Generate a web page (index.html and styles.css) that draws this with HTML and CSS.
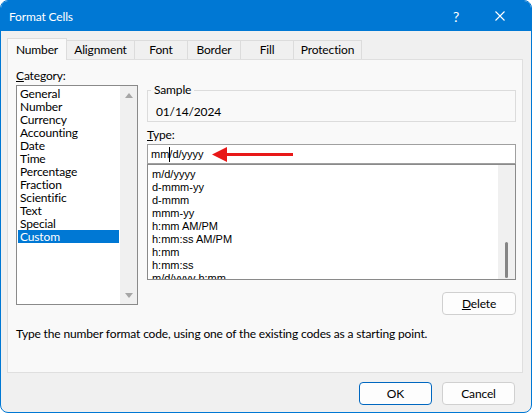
FILE: index.html
```html
<!DOCTYPE html>
<html>
<head>
<meta charset="utf-8">
<link rel="stylesheet" href="styles.css">
</head>
<body>
<div class="window">
  <div class="titlebar">
    <span class="title">Format Cells</span>
    <span class="tb-btn help">?</span>
    <span class="tb-btn close"><svg width="10" height="10" viewBox="0 0 10 10"><path d="M0.5 0.5 L9.5 9.5 M9.5 0.5 L0.5 9.5" stroke="#fff" stroke-width="1.1" fill="none"/></svg></span>
  </div>
  <div class="body">
    <div class="tabs">
      <div class="tab active tab-number">Number</div>
      <div class="tab tab-align">Alignment</div>
      <div class="tab tab-font">Font</div>
      <div class="tab tab-border">Border</div>
      <div class="tab tab-fill">Fill</div>
      <div class="tab tab-prot">Protection</div>
    </div>
    <div class="pane">
      <div class="columns">
        <div class="left">
          <div class="label"><u>C</u>ategory:</div>
          <div class="listbox cat">
            <div class="items">
              <div class="item">General</div>
              <div class="item">Number</div>
              <div class="item">Currency</div>
              <div class="item">Accounting</div>
              <div class="item">Date</div>
              <div class="item">Time</div>
              <div class="item">Percentage</div>
              <div class="item">Fraction</div>
              <div class="item">Scientific</div>
              <div class="item">Text</div>
              <div class="item">Special</div>
              <div class="item selected">Custom</div>
            </div>
            <div class="vscroll arrows"><span class="tri-up"></span><span class="tri-down"></span></div>
          </div>
        </div>
        <div class="right">
          <fieldset class="sample">
            <legend>Sample</legend>
            <div class="sample-value">01/14/2024</div>
          </fieldset>
          <div class="label type-label"><u>T</u>ype:</div>
          <div class="input">mm<span class="caret"></span>/d/yyyy<svg class="arrow" width="82" height="17" viewBox="0 0 82 17"><path d="M13 8.5 H81" stroke="#e81818" stroke-width="3"/><polygon points="0,8.5 15,1 15,16" fill="#e81818"/></svg></div>
          <div class="listbox fmt">
            <div class="items">
              <div class="item">m/d/yyyy</div>
              <div class="item">d-mmm-yy</div>
              <div class="item">d-mmm</div>
              <div class="item">mmm-yy</div>
              <div class="item">h:mm AM/PM</div>
              <div class="item">h:mm:ss AM/PM</div>
              <div class="item">h:mm</div>
              <div class="item">h:mm:ss</div>
              <div class="item">m/d/yyyy h:mm</div>
            </div>
            <div class="vscroll thin"><span class="thumb"></span></div>
          </div>
          <div class="actions"><button class="btn"><u>D</u>elete</button></div>
        </div>
      </div>
      <div class="desc">Type the number format code, using one of the existing codes as a starting point.</div>
    </div>
    <div class="footer">
      <button class="btn default">OK</button>
      <button class="btn">Cancel</button>
    </div>
  </div>
</div>
</body>
</html>
```

FILE: styles.css
```css
html, body {
  margin: 0;
  background: #ffffff;
}
body {
  font-family: Lato, "Noto Sans", sans-serif;
  font-size: 12px;
  letter-spacing: -0.15px;
  color: #000;
}
.window {
  width: 532px;
  height: 413px;
  box-sizing: border-box;
  border: 1px solid #0078d4;
  border-radius: 8px;
  background: #f0f0f0;
  display: flex;
  flex-direction: column;
  overflow: hidden;
}
.titlebar {
  height: 30px;
  flex: none;
  background: #0078d4;
  color: #fff;
  display: flex;
  align-items: center;
  padding: 0 9px 0 8px;
}
.title {
  flex: 1;
  font-size: 12px;
}
.tb-btn {
  width: 44px;
  height: 30px;
  display: flex;
  align-items: center;
  justify-content: center;
}
.help {
  font-size: 14px;
}
.body {
  flex: 1;
  display: flex;
  flex-direction: column;
  padding: 7px 8px 0 6px;
}
.tabs {
  display: flex;
  align-items: flex-start;
  height: 22px;
  margin-bottom: -1px;
  position: relative;
  z-index: 1;
}
.tab {
  box-sizing: border-box;
  height: 19px;
  margin-top: 2px;
  border-top: 1px solid #dcdcdc;
  border-left: 1px solid #dcdcdc;
  background: #f0f0f0;
  text-align: center;
  line-height: 18px;
}
.tab:last-child {
  border-right: 1px solid #dcdcdc;
}
.tab.active {
  height: 22px;
  margin-top: 0;
  background: #f9f9f9;
  border-right: 1px solid #dcdcdc;
  line-height: 22px;
}
.tab.active + .tab {
  border-left: none;
}
.tab-number { width: 60px; }
.tab-align { width: 67px; }
.tab-font { width: 53px; }
.tab-border { width: 53px; }
.tab-fill { width: 53px; }
.tab-prot { width: 69px; }
.pane {
  box-sizing: border-box;
  height: 314px;
  flex: none;
  border: 1px solid #dfdfdf;
  background: #f9f9f9;
  padding: 8px 6px 0 8px;
}
.columns {
  display: grid;
  grid-template-columns: 122px 369px;
  column-gap: 9px;
  align-items: start;
}
.label {
  height: 16px;
  line-height: 16px;
  margin-bottom: 1px;
}
.listbox {
  box-sizing: border-box;
  border: 1px solid #8a8a8a;
  background: #fff;
  display: flex;
}
.listbox .items {
  flex: 1;
  padding: 1px;
  overflow: hidden;
}
.item {
  height: 13px;
  line-height: 14px;
  padding-left: 2px;
  white-space: nowrap;
}
.item.selected {
  background: #0078d4;
  color: #fff;
}
.cat {
  height: 220px;
}
.vscroll {
  width: 17px;
  flex: none;
  background: #f0f0f0;
  display: flex;
  flex-direction: column;
  align-items: center;
}
.arrows {
  justify-content: space-between;
  padding: 7px 0 6px;
}
.tri-up {
  width: 0;
  height: 0;
  border-left: 4px solid transparent;
  border-right: 4px solid transparent;
  border-bottom: 5px solid #a6a6a6;
}
.tri-down {
  width: 0;
  height: 0;
  border-left: 4px solid transparent;
  border-right: 4px solid transparent;
  border-top: 5px solid #a6a6a6;
}
.sample {
  margin: 14px 0 0;
  padding: 6px 3px 1px;
  border: 1px solid #dcdcdc;
  min-width: 0;
}
.sample legend {
  padding: 0 3px;
  margin-left: 0;
  line-height: 16px;
}
.sample-value {
  line-height: 16px;
  padding-left: 5px;
}
.type-label {
  margin-top: 5px;
}
.input {
  position: relative;
  box-sizing: border-box;
  height: 20px;
  border: 1px solid #a0a0a0;
  background: #fff;
  padding-left: 3px;
  line-height: 18px;
  font-family: "Liberation Sans", Arial, sans-serif;
  font-size: 11px;
  letter-spacing: 0;
}
.caret {
  display: inline-block;
  width: 1px;
  height: 15px;
  background: #000;
  vertical-align: -4px;
  margin-right: -1px;
}
.arrow {
  position: absolute;
  left: 64px;
  top: 1px;
}
.fmt {
  height: 116px;
}
.fmt .items {
  padding: 2px 1px 0 2px;
  font-family: "Liberation Sans", Arial, sans-serif;
  font-size: 11px;
  letter-spacing: 0;
}
.thin {
  justify-content: flex-end;
  padding-bottom: 1px;
}
.thumb {
  width: 3px;
  height: 36px;
  border-radius: 2px;
  background: #858585;
}
.actions {
  display: flex;
  justify-content: flex-end;
  margin-top: 12px;
}
.btn {
  box-sizing: border-box;
  width: 74px;
  height: 23px;
  border: 1px solid #d0d0d0;
  border-radius: 4px;
  background: #fdfdfd;
  font-family: inherit;
  font-size: 12px;
  letter-spacing: -0.15px;
  color: #000;
  padding: 0;
}
.desc {
  margin-top: 11px;
  line-height: 16px;
}
.footer {
  display: flex;
  justify-content: flex-end;
  gap: 10px;
  padding: 9px 8px 0 0;
}
.footer .btn {
  width: 73px;
}
.btn.default {
  border-color: #0067c0;
}
```
